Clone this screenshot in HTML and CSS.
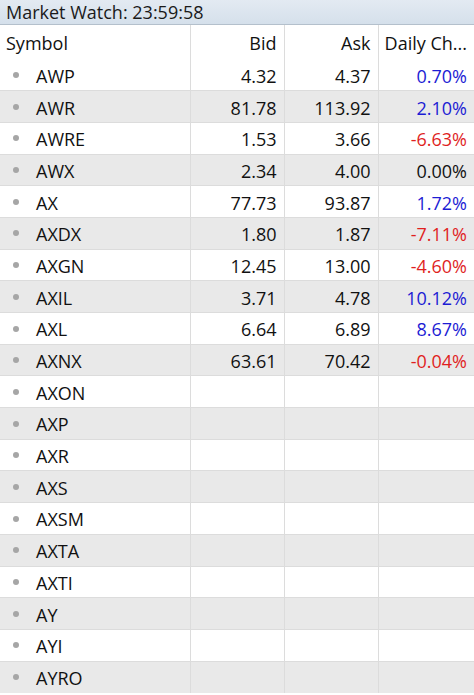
FILE: index.html
```html
<!DOCTYPE html>
<html lang="en">
<head>
    <meta charset="UTF-8">
    <meta name="viewport" content="width=device-width, initial-scale=1.0">
    <title>Market Watch</title>
    <link rel="stylesheet" href="styles.css">
</head>
<body>
    <div class="market-watch">
        <div class="title-bar">Market Watch: 23:59:58</div>

        <table class="quotes">
            <colgroup>
                <col class="col-symbol">
                <col class="col-bid">
                <col class="col-ask">
                <col class="col-change">
            </colgroup>
            <thead>
                <tr>
                    <th class="symbol-head">Symbol</th>
                    <th>Bid</th>
                    <th>Ask</th>
                    <th>Daily Ch...</th>
                </tr>
            </thead>
            <tbody>
                <tr><td class="symbol"><span class="dot"></span>AWP</td><td>4.32</td><td>4.37</td><td class="up">0.70%</td></tr>
                <tr><td class="symbol"><span class="dot"></span>AWR</td><td>81.78</td><td>113.92</td><td class="up">2.10%</td></tr>
                <tr><td class="symbol"><span class="dot"></span>AWRE</td><td>1.53</td><td>3.66</td><td class="down">-6.63%</td></tr>
                <tr><td class="symbol"><span class="dot"></span>AWX</td><td>2.34</td><td>4.00</td><td>0.00%</td></tr>
                <tr><td class="symbol"><span class="dot"></span>AX</td><td>77.73</td><td>93.87</td><td class="up">1.72%</td></tr>
                <tr><td class="symbol"><span class="dot"></span>AXDX</td><td>1.80</td><td>1.87</td><td class="down">-7.11%</td></tr>
                <tr><td class="symbol"><span class="dot"></span>AXGN</td><td>12.45</td><td>13.00</td><td class="down">-4.60%</td></tr>
                <tr><td class="symbol"><span class="dot"></span>AXIL</td><td>3.71</td><td>4.78</td><td class="up">10.12%</td></tr>
                <tr><td class="symbol"><span class="dot"></span>AXL</td><td>6.64</td><td>6.89</td><td class="up">8.67%</td></tr>
                <tr><td class="symbol"><span class="dot"></span>AXNX</td><td>63.61</td><td>70.42</td><td class="down">-0.04%</td></tr>
                <tr><td class="symbol"><span class="dot"></span>AXON</td><td></td><td></td><td></td></tr>
                <tr><td class="symbol"><span class="dot"></span>AXP</td><td></td><td></td><td></td></tr>
                <tr><td class="symbol"><span class="dot"></span>AXR</td><td></td><td></td><td></td></tr>
                <tr><td class="symbol"><span class="dot"></span>AXS</td><td></td><td></td><td></td></tr>
                <tr><td class="symbol"><span class="dot"></span>AXSM</td><td></td><td></td><td></td></tr>
                <tr><td class="symbol"><span class="dot"></span>AXTA</td><td></td><td></td><td></td></tr>
                <tr><td class="symbol"><span class="dot"></span>AXTI</td><td></td><td></td><td></td></tr>
                <tr><td class="symbol"><span class="dot"></span>AY</td><td></td><td></td><td></td></tr>
                <tr><td class="symbol"><span class="dot"></span>AYI</td><td></td><td></td><td></td></tr>
                <tr><td class="symbol"><span class="dot"></span>AYRO</td><td></td><td></td><td></td></tr>
            </tbody>
        </table>
    </div>
</body>
</html>
```

FILE: styles.css
```css
body {
    margin: 0;
    background-color: #ffffff;
    font-family: "Open Sans", "Noto Sans", sans-serif;
    color: #111111;
    overflow: hidden;
}

.market-watch {
    width: 474px;
}

.title-bar {
    height: 24px;
    line-height: 24px;
    padding-left: 6px;
    font-size: 18px;
    color: #1a1a1a;
    background: linear-gradient(#e3eaf2, #d5e0eb);
    border-bottom: 1px solid #b4c0cc;
    white-space: nowrap;
}

.quotes {
    width: 474px;
    table-layout: fixed;
    border-collapse: collapse;
    font-size: 18px;
}

.col-symbol {
    width: 190px;
}

.col-bid {
    width: 94px;
}

.col-ask {
    width: 94px;
}

.col-change {
    width: 96px;
}

.quotes th {
    height: 34px;
    padding: 2px 7px 0 0;
    font-weight: normal;
    text-align: right;
    border-left: 1px solid #dcdcdc;
    white-space: nowrap;
    box-sizing: border-box;
}

.quotes th.symbol-head {
    text-align: left;
    padding-left: 6px;
    border-left: none;
}

.quotes td {
    height: 31.7px;
    padding: 2px 7px 0 0;
    text-align: right;
    border-left: 1px solid #dcdcdc;
    border-top: 1px solid #dcdcdc;
    white-space: nowrap;
    box-sizing: border-box;
}

.quotes tbody tr:first-child td {
    border-top: none;
}

.quotes tbody tr:nth-child(even) td {
    background-color: #e9e9e9;
}

.quotes td.symbol {
    text-align: left;
    padding-left: 13px;
    border-left: none;
}

.dot {
    display: inline-block;
    width: 6px;
    height: 6px;
    border-radius: 50%;
    background-color: #a6a6a6;
    margin-right: 17px;
    vertical-align: middle;
    position: relative;
    top: -3px;
}

.quotes td.up {
    color: #1c1cd4;
}

.quotes td.down {
    color: #e01f1f;
}
```
